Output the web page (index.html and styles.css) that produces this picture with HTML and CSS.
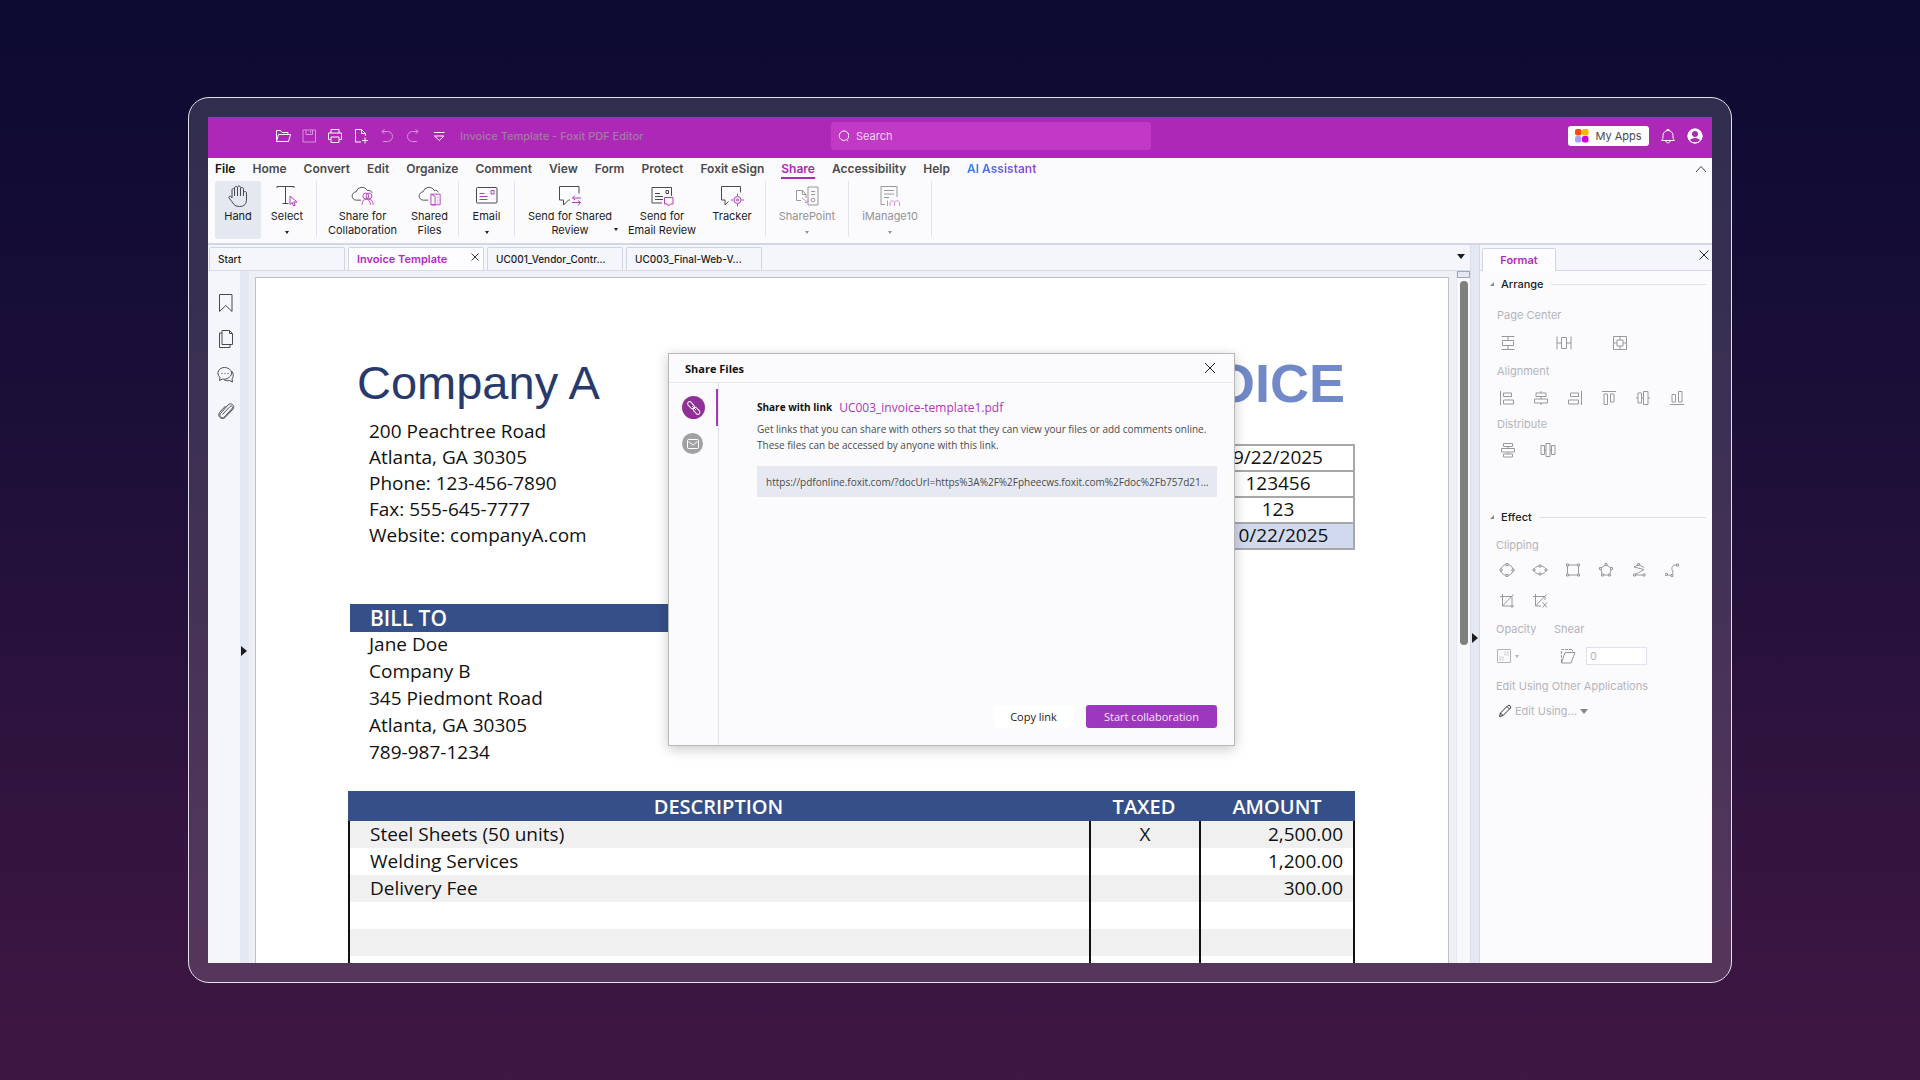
FILE: index.html
```html
<!DOCTYPE html>
<html lang="en">
<head>
<meta charset="utf-8">
<title>Invoice Template - Foxit PDF Editor</title>
<link rel="stylesheet" href="styles.css">
</head>
<body>
<div class="frame">
<div class="app">

  <header class="titlebar">
    <div class="quick">
      <button class="qa" aria-label="Open"><svg width="16" height="16" viewBox="0 0 16 16"><path d="M1.500 13.500V2.500h4l1.500 2h6v2M1.500 13.500l2-7h12l-2 7z"/></svg></button>
      <button class="qa dim" aria-label="Save"><svg width="16" height="16" viewBox="0 0 16 16"><path d="M2 2h12.500v12H2zM5 2v4.500h6.500V2M9.500 3v2"/></svg></button>
      <button class="qa" aria-label="Print"><svg width="16" height="16" viewBox="0 0 16 16"><path d="M4 5V1.500h8V5M4 11.500H1.500V5h13v6.500H12M4 9h8v5.500H4z"/></svg></button>
      <button class="qa" aria-label="New page"><svg width="16" height="16" viewBox="0 0 16 16"><path d="M8 14H2.500V1.500h6l4 4V8M8.500 1.500v4h4M12 9.500v6M9 12.500h6"/></svg></button>
      <button class="qa dim" aria-label="Undo"><svg width="16" height="16" viewBox="0 0 16 16"><path d="M5.500 1L3 3.500 5.500 6M3 3.500h5.500a5 5 0 0 1 0 10H4"/></svg></button>
      <button class="qa dim" aria-label="Redo"><svg width="16" height="16" viewBox="0 0 16 16"><path d="M10.500 1L13 3.500 10.500 6M13 3.500H7.500a5 5 0 0 0 0 10H12"/></svg></button>
      <button class="qa" aria-label="More"><svg width="16" height="16" viewBox="0 0 16 16"><path d="M3 4.500h10.500M3.500 8h9.500l-4.750 4.500z"/></svg></button>
    </div>
    <div class="doc-title">Invoice Template - Foxit PDF Editor</div>
    <label class="search">
      <svg width="12" height="12" viewBox="0 0 12 12"><path d="M10 9.500A4.800 4.800 0 1 0 8.500 10.300M9 9.200l2 2"/></svg>
      <input type="text" placeholder="Search" aria-label="Search">
    </label>
    <div class="account">
      <button class="my-apps"><svg width="14" height="14" viewBox="0 0 14 14"><rect width="6.500" height="6.500" rx="2" fill="#ff4e00"/><rect x="7" width="6.500" height="6.500" rx="2" fill="#ffb400"/><rect y="7" width="6.500" height="6.500" rx="2" fill="#a8a0ff"/><rect x="7" y="7" width="6.500" height="6.500" rx="2" fill="#cf00d8"/></svg>My Apps</button>
      <button class="qa" aria-label="Notifications"><svg width="16" height="16" viewBox="0 0 16 16"><path d="M1.500 12.500c1.500-1.500 1.500-2.500 1.500-5a5 5 0 0 1 10 0c0 2.500 0 3.500 1.500 5zM6 13c0 2.500 4 2.500 4 0M7 2.500V1.500h2v1"/></svg></button>
      <button class="qa" aria-label="Account"><svg width="16" height="16" viewBox="0 0 16 16"><circle cx="8" cy="8" r="7.500" fill="#fff" stroke="none"/><circle cx="8" cy="6" r="3" fill="#ae28b7" stroke="none"/><path d="M2.500 12.500c2-3.500 9-3.500 11 0-1.500 2.600-9.500 2.600-11 0z" fill="#ae28b7" stroke="none"/><circle cx="8" cy="8" r="7"/></svg></button>
    </div>
  </header>

  <nav class="menu">
    <a class="file" href="#">File</a><a href="#">Home</a><a href="#">Convert</a><a href="#">Edit</a><a href="#">Organize</a><a href="#">Comment</a><a href="#">View</a><a href="#">Form</a><a href="#">Protect</a><a href="#">Foxit eSign</a><a class="current" href="#">Share</a><a href="#">Accessibility</a><a href="#">Help</a><a class="ai" href="#"><span>AI Assistant</span></a>
    <button class="collapse" aria-label="Collapse ribbon"><svg width="12" height="8" viewBox="0 0 12 8"><path d="M1 7l5-5.500L11 7"/></svg></button>
  </nav>

  <div class="ribbon">
    <div class="group g-tools">
      <button class="tool w46 active"><svg viewBox="0 0 24 22"><path d="M6 13V5c0-2 2.500-2 2.500 0v6V3c0-2 3-2 3 0v8V2.500c0-2 3-2 3 0V11 4c0-2 3-2 3 0v7V8c0-2 3-2 3 0v6c0 5-2 7.500-7 7.500-4 0-5.500-1.500-6.500-3.500L3 13c-.8-1.800 1.500-2.500 2.500-1z"/></svg><span>Hand</span></button>
      <button class="tool w52"><svg viewBox="0 0 24 22"><path d="M2 3V1.500h17V3M10.500 1.500v17M7.500 18.500h6"/><path class="p" d="M15 11v8.500l2.200-2 1.300 3.500 1.700-.7-1.500-3.300H22z"/></svg><span>Select</span><i class="caret"></i></button>
    </div>
    <div class="group g-share">
      <button class="tool w84"><svg viewBox="0 0 26 22"><path d="M11 15.500H6a4.500 4.500 0 0 1-.5-9 6.500 6.500 0 0 1 12-1.500c3-.5 5 1 5.500 2.500"/><circle class="p" cx="16" cy="11" r="3.200"/><circle class="p" cx="19.500" cy="11" r="3.200"/><path class="p" d="M12 20.500c0-4 2-6 4.500-6s4.500 2 4.500 6M19 14.500c3 0 5 2 5 6"/></svg><span>Share for<br>Collaboration</span></button>
      <button class="tool w50"><svg viewBox="0 0 26 22"><path d="M11 15.500H6a4.500 4.500 0 0 1-.5-9 6.500 6.500 0 0 1 12-1.500c2.500-.5 4 .5 4.500 2"/><path class="p" d="M14 9h10v11.500H14zM14 9l4.500 2.500V21L14 20.500M21.500 12v1M21.500 15v1M21.500 18v1"/></svg><span>Shared<br>Files</span></button>
    </div>
    <div class="group g-mail">
      <button class="tool w52"><svg viewBox="0 0 24 22"><rect x="1.500" y="2.500" width="20.500" height="15.500" rx="1"/><path class="p" d="M4.500 8.500h5M4.500 11.500h8M4.500 14.500h8M16 5.500h3v3.500h-3z"/></svg><span>Email</span><i class="caret"></i></button>
    </div>
    <div class="group g-review">
      <button class="tool w104"><svg viewBox="0 0 24 22"><path d="M21 8.500V1.500H1.500v13.500h4V20l5-5H12"/><path class="p" d="M23 13h-8.500l2.500-2.500M14 17.500h8.500L20 20.500M14.500 13l2.500 2M22.500 17.500L20 15.500"/></svg><span>Send for Shared<br>Review</span><i class="caret side"></i></button>
      <button class="tool w80"><svg viewBox="0 0 24 22"><path d="M12 18H2V2.500h19.500V11M5 8.500h5M5 11.500h8M5 14.500h8M16 5.500h2.500v3H16z"/><path class="p" d="M14.500 12.500h8.500v6.500h-2.500l-2 2-1-2h-3z"/></svg><span>Send for<br>Email Review</span></button>
      <button class="tool w60"><svg viewBox="0 0 24 22"><path d="M20.500 7.500V1.500H1.500v13.500H5V20l3.500-3.500"/><circle class="p" cx="17.500" cy="15" r="3.500"/><circle class="p" cx="17.500" cy="15" r="1"/><path class="p" d="M17.500 8.500V11M17.500 19v2.500M11 15h2.500M21.500 15H24"/></svg><span>Tracker</span></button>
    </div>
    <div class="group g-cloud">
      <button class="tool w76 off"><svg viewBox="0 0 24 22"><path d="M6 15.500H1.500V5.500h6l3.500 4V13M7.500 5.500v4H11M13 2h10v18H13V2M16 6.500h4M16 9.500h4"/><circle cx="18" cy="15" r="1.800"/><path class="p" d="M7 13l6 4.500M13 14.500v3h-3.500"/></svg><span>SharePoint</span><i class="caret"></i></button>
    </div>
    <div class="group g-cloud">
      <button class="tool w76 off"><svg viewBox="0 0 24 22"><path d="M7 19.500H3V1.500h16V12M6 5.500h10M6 9h10M6 12.500h5"/><path class="p" d="M9.500 21v-5.500M12 21v-3c0-3 4.500-3 4.500 0v3M16.500 18c0-3 5-3 5 0v3M9.500 13.500v.5"/></svg><span>iManage10</span><i class="caret"></i></button>
    </div>
  </div>

  <div class="work">
    <div class="main">
      <div class="tabs">
        <button class="tab">Start</button>
        <button class="tab on">Invoice Template<svg width="10" height="10" viewBox="0 0 10 10"><path d="M1.500 1.500l7 7M8.500 1.500l-7 7"/></svg></button>
        <button class="tab">UC001_Vendor_Contr...</button>
        <button class="tab">UC003_Final-Web-V...</button>
        <button class="tab-list" aria-label="All tabs"><i class="caret big"></i></button>
      </div>
      <div class="body">
        <aside class="rail">
          <button aria-label="Bookmarks"><svg viewBox="0 0 18 20"><path d="M2.500 1.500h12.500v17l-6.250-6-6.250 6z"/></svg></button>
          <button aria-label="Pages"><svg viewBox="0 0 18 20"><path d="M5 1.500h7.500l3 3V15.500H5zM12.500 1.500v3h3M5 4H2.500v14.500H13v-3"/></svg></button>
          <button aria-label="Comments"><svg viewBox="0 0 18 20"><path d="M3 12.500C-1.500 8 2 2.500 7.500 2.500s9 5 6 8.500-6.500 3.500-8 3l-3 1.500zM14.500 6c2.500 2.500 2 6 .5 8l.5 3-3-1.500c-2 .5-4 .3-5.500-.8"/><path d="M4.500 8.500h1M7.500 8.500h1M10.500 8.500h1"/></svg></button>
          <button aria-label="Attachments"><svg viewBox="0 0 18 20"><path d="M5.500 13.500l7.500-8c1.500-1.500 3.500.5 2 2l-7.500 8.500c-2.500 2.500-6-.5-4-3.500L11 4c3-3 7.500.5 5 4l-8 8.500c-3 3-8-1-5.500-5L8.500 5"/></svg></button>
        </aside>
        <div class="splitter"><i class="arrow left-arrow"></i></div>
        <div class="canvas">
          <article class="page">
            <section class="top">
              <div class="seller">
                <h1>Company A</h1>
                <address>200 Peachtree Road<br>Atlanta, GA 30305<br>Phone: 123-456-7890<br>Fax: 555-645-7777<br>Website: companyA.com</address>
              </div>
              <div class="facts">
                <h2>INVOICE</h2>
                <table>
                  <tr><td>9/22/2025</td></tr>
                  <tr><td>123456</td></tr>
                  <tr><td>123</td></tr>
                  <tr class="due"><td>10/22/2025</td></tr>
                </table>
              </div>
            </section>
            <section class="bill">
              <h3>BILL TO</h3>
              <address>Jane Doe<br>Company B<br>345 Piedmont Road<br>Atlanta, GA 30305<br>789-987-1234</address>
            </section>
            <table class="items">
              <colgroup><col><col class="c-tax"><col class="c-amt"></colgroup>
              <thead><tr><th>DESCRIPTION</th><th>TAXED</th><th>AMOUNT</th></tr></thead>
              <tbody>
                <tr><td>Steel Sheets (50 units)</td><td>X</td><td>2,500.00</td></tr>
                <tr><td>Welding Services</td><td></td><td>1,200.00</td></tr>
                <tr><td>Delivery Fee</td><td></td><td>300.00</td></tr>
                <tr><td></td><td></td><td></td></tr>
                <tr><td></td><td></td><td></td></tr>
                <tr><td></td><td></td><td></td></tr>
              </tbody>
            </table>
          </article>
          <div class="scroll"><div class="split-box"></div><div class="thumb"></div></div>
        </div>
      </div>
    </div>
    <div class="splitter full"><i class="arrow right-arrow"></i></div>

    <aside class="panel">
      <div class="panel-tabs"><button class="tab fmt on">Format</button><button class="x" aria-label="Close panel"><svg width="12" height="12" viewBox="0 0 12 12"><path d="M1.500 1.500l9 9M10.500 1.500l-9 9"/></svg></button></div>
      <div class="panel-body">
        <h4>Arrange</h4>
        <p class="lab center-lab">Page Center</p>
        <div class="icons wide">
          <button aria-label="Center vertically"><svg viewBox="0 0 16 16"><path d="M1.500 1.500h13M1.500 14.500h13M8 1.500V5M8 11v3.500M2.500 5.500h11v5h-11z"/></svg></button>
          <button aria-label="Center horizontally"><svg viewBox="0 0 16 16"><path d="M1 1.500v13M15 1.500v13M1 8h4M11 8h4M5.500 2.500h5v11h-5z"/></svg></button>
          <button aria-label="Center both"><svg viewBox="0 0 16 16"><path d="M1.500 1.500h13v13h-13zM5 5h6v6H5zM8 1.500V5M8 11v3.500M1.500 8H5M11 8h3.500"/></svg></button>
        </div>
        <p class="lab">Alignment</p>
        <div class="icons">
          <button aria-label="Align left"><svg viewBox="0 0 16 16"><path d="M1.500 1v14M4.500 3h8v3.500h-8zM4.500 10h10v4h-10z"/></svg></button>
          <button aria-label="Align center"><svg viewBox="0 0 16 16"><path d="M8 1v2M8 6.500V9M8 13v2M3 3h10v3.500H3zM1.500 9h13v4h-13z"/></svg></button>
          <button aria-label="Align right"><svg viewBox="0 0 16 16"><path d="M14.500 1v14M3.500 3h8v3.500h-8zM1.500 10h10v4h-10z"/></svg></button>
          <button aria-label="Align top"><svg viewBox="0 0 16 16"><path d="M1 1.500h14M3 4h3.500v10.500H3zM9.500 4H13v8H9.500z"/></svg></button>
          <button aria-label="Align middle"><svg viewBox="0 0 16 16"><path d="M1 8h2M6.500 8h2M13 8h2M3 3h3.500v10H3zM8.500 1.500H13v13H8.500z"/></svg></button>
          <button aria-label="Align bottom"><svg viewBox="0 0 16 16"><path d="M1 14.500h14M3 4.500h3.500V12H3zM9.500 1.500H13V12H9.500z"/></svg></button>
        </div>
        <p class="lab">Distribute</p>
        <div class="icons mid">
          <button aria-label="Distribute vertically"><svg viewBox="0 0 16 16"><path d="M3.500 1.500h9v3h-9zM1.500 6.500h13v3.500h-13zM3.500 12h9v3h-9zM8 4.500v2M8 10v2"/></svg></button>
          <button aria-label="Distribute horizontally"><svg viewBox="0 0 16 16"><path d="M1 3.500h3.500v9H1zM6 1.500h4v13H6zM11.500 3.500H15v9h-3.500zM4.500 8H6M10 8h1.500"/></svg></button>
        </div>
        <h4 class="effect">Effect</h4>
        <p class="lab clip-lab">Clipping</p>
        <div class="icons clip">
          <button aria-label="Circle"><svg viewBox="0 0 16 16"><ellipse cx="8" cy="8" rx="6" ry="5.500"/><path class="n" d="M7 1.500h2v2H7zM7 12.500h2v2H7zM1 7h2v2H1zM13 7h2v2h-2z"/></svg></button>
          <button aria-label="Ellipse"><svg viewBox="0 0 16 16"><ellipse cx="8" cy="8" rx="6" ry="4"/><path class="n" d="M7 3h2v2H7zM7 11h2v2H7zM1 7h2v2H1zM13 7h2v2h-2z"/></svg></button>
          <button aria-label="Rectangle"><svg viewBox="0 0 16 16"><path d="M2.500 3h11v10h-11z"/><path class="n" d="M1.500 2h2v2h-2zM12.500 2h2v2h-2zM1.500 12h2v2h-2zM12.500 12h2v2h-2z"/></svg></button>
          <button aria-label="Polygon"><svg viewBox="0 0 16 16"><path d="M8 2.500l5.500 4L11.500 13h-7l-2-6.500z"/><path class="n" d="M7 1.500h2v2H7zM12.500 5.500h2v2h-2zM1.500 5.500h2v2h-2zM3.500 12h2v2h-2zM10.500 12h2v2h-2z"/></svg></button>
          <button aria-label="Polyline"><svg viewBox="0 0 16 16"><path d="M7.500 2.500L3 5l10 2.500-9.500 5.500h9.500M7.500 2.500l5.500 3"/><path class="n" d="M6.500 1.500h2v2h-2zM2.500 12h2v2h-2zM12 12h2v2h-2z"/></svg></button>
          <button aria-label="Path"><svg viewBox="0 0 16 16"><path d="M3 12.500c4 2 7 0 5.500-3.500S8 3 13 3"/><path class="n" d="M1.500 11.500h2v2h-2zM12.500 2h2v2h-2zM7 12.500h2v2H7z"/></svg></button>
          <button aria-label="Edit clipping"><svg viewBox="0 0 16 16"><path d="M3.500 1v12H15M1 3.500h12V15M3.500 13L14.500 1.500"/></svg></button>
          <button aria-label="Clear clipping"><svg viewBox="0 0 16 16"><path d="M3.500 1v12H9M1 3.500h12V7M3.500 13L14.500 1.500M10.500 9.500l4.500 5M15 9.500l-4.500 5"/></svg></button>
        </div>
        <div class="pair"><span>Opacity</span><label for="shear">Shear</label></div>
        <div class="pair-row">
          <button class="swatch" aria-label="Opacity"><svg width="16" height="16" viewBox="0 0 16 16"><path d="M1.500 1.500h13v13h-13z"/><path d="M8 3h5v5H8zM3 8h5v5H3z" fill="#e8e8ea" stroke="none"/></svg><i class="caret"></i></button>
          <svg class="shear-ic" width="16" height="16" viewBox="0 0 16 16"><path d="M5 4.500h10L11 15H1.500z"/><path d="M1.500 14V1.500h11v2" stroke-dasharray="3 1"/></svg>
          <input id="shear" type="text" value="0">
        </div>
        <p class="lab edit-lab">Edit Using Other Applications</p>
        <button class="edit"><svg width="14" height="14" viewBox="0 0 14 14"><path d="M1.500 12.500l1-3.500 7.500-7.500c1-1 3.500 1 2.500 2.500L5 11.500zM9 2.500L11.500 5M2.500 9L5 11.500"/></svg>Edit Using...<i class="caret big grey"></i></button>
      </div>
    </aside>
  </div>

  <section class="dialog" role="dialog" aria-labelledby="dlg-title">
    <header><h5 id="dlg-title">Share Files</h5><button aria-label="Close"><svg width="12" height="12" viewBox="0 0 12 12"><path d="M1 1l10 10M11 1L1 11"/></svg></button></header>
    <div class="dlg-main">
      <div class="dlg-side">
        <button class="round link" aria-label="Share with link"><svg width="16" height="16" viewBox="0 0 16 16"><rect x="1" y="3.200" width="8" height="4" rx="2" transform="rotate(48 5 5.200)"/><rect x="6.500" y="8.800" width="8" height="4" rx="2" transform="rotate(48 10.500 10.800)"/><path d="M6 6l4 4"/></svg></button>
        <button class="round mail" aria-label="Share by email"><svg width="14" height="14" viewBox="0 0 14 14"><rect x="1.500" y="2.500" width="11" height="9" rx="1"/><path d="M2.500 4.500L7 8l4.500-3.500"/></svg></button>
      </div>
      <div class="dlg-body">
        <div class="dlg-title-row"><strong>Share with link</strong><a href="#">UC003_invoice-template1.pdf</a></div>
        <p>Get links that you can share with others so that they can view your files or add comments online. These files can be accessed by anyone with this link.</p>
        <input type="text" readonly aria-label="Link" value="https://pdfonline.foxit.com/?docUrl=https%3A%2F%2Fpheecws.foxit.com%2Fdoc%2Fb757d21...">
        <div class="dlg-actions"><button class="copy">Copy link</button><button class="start">Start collaboration</button></div>
      </div>
    </div>
  </section>

</div>
</div>
</body>
</html>
```
FILE: styles.css
```css
* { box-sizing: border-box; margin: 0; padding: 0; }
html { height: 100%; }
body {
  min-height: 100vh;
  display: flex;
  padding: 97px 188px;
  background: linear-gradient(180deg, #0c0a31 0%, #1c0f38 40%, #32143f 75%, #401743 100%);
  font-family: Inter, "Liberation Sans", sans-serif;
  font-size: 11px;
  color: #1c1c1e;
}
button { border: 0; background: none; font: inherit; color: inherit; display: flex; align-items: center; justify-content: center; }
a { color: inherit; text-decoration: none; }
svg { fill: none; stroke: currentColor; stroke-width: 1; flex: none; }
i { font-style: normal; }
address { font-style: normal; }

.frame {
  flex: 1;
  min-width: 0;
  display: flex;
  padding: 19px;
  border: 1px solid #e3e0ea;
  border-radius: 21px;
  background: rgba(255, 255, 255, .14);
}
.app {
  flex: 1;
  min-width: 0;
  height: calc(100vh - 234px);
  display: flex;
  flex-direction: column;
  position: relative;
  overflow: hidden;
  background: #fbfbfe;
}

/* title bar */
.titlebar { flex: none; height: 41px; display: grid; grid-template-columns: 252px 371px 320px 1fr; background: #ae28b7; color: #fff; padding-bottom: 4px; align-items: center; }
.quick { display: flex; gap: 10px; padding-left: 67px; }
.qa { width: 16px; height: 16px; }
.quick .dim { opacity: .5; }
.doc-title { font-size: 11px; font-weight: 500; color: #a07ea0; }
.search { height: 28px; display: flex; align-items: center; gap: 7px; padding-left: 6px; border-radius: 3px; background: #c239c6; }
.search input { flex: 1; border: 0; background: none; outline: 0; font: 11px Inter, sans-serif; color: #f3d4f5; }
.search input::placeholder { color: #f3d4f5; }
.account { display: flex; justify-content: flex-end; align-items: center; gap: 11px; padding-right: 9px; }
.my-apps { height: 20px; width: 81px; gap: 6px; border-radius: 3px; background: #fff; color: #4a4a4e; }
.my-apps svg { stroke: none; }

/* menu */
.menu { flex: none; height: 22px; display: flex; gap: 17px; padding: 0 5px 0 7px; font-size: 12px; font-weight: 600; color: #4a4a4c; line-height: 22px; }
.menu .file { color: #111; }
.menu .current { color: #ae28b7; border-bottom: 2px solid #ae28b7; height: 21px; }
.menu .ai span { background: linear-gradient(90deg, #2b7cf0, #9840e8); -webkit-background-clip: text; background-clip: text; color: transparent; }
.collapse { margin-left: auto; width: 12px; color: #444; }

/* ribbon */
.ribbon { flex: none; height: 65px; display: flex; padding: 1px 0 0 7px; border-bottom: 2px solid #d3d7e4; }
.group { display: flex; justify-content: center; height: 56px; border-right: 1px solid #e2e5f0; }
.g-tools { width: 102px; justify-content: flex-start; }
.g-share { width: 142px; }
.g-mail { width: 56px; }
.g-review { width: 251px; }
.g-cloud { width: 83px; }
.tool { position: relative; flex-direction: column; justify-content: flex-start; height: 58px; padding-top: 4px; border-radius: 3px; font-size: 11px; line-height: 14px; color: #1c1c1e; }
.tool svg { width: 24px; height: 22px; margin-bottom: 2px; color: #4a4a4c; }
.tool .p { stroke: #b53cc0; }
.tool.active { background: #e3e8f1; }
.tool.off { color: #929296; }
.tool.off svg { opacity: .55; }
.w46 { width: 46px; } .w50 { width: 50px; } .w52 { width: 52px; } .w60 { width: 60px; }
.w76 { width: 76px; } .w80 { width: 80px; } .w84 { width: 84px; } .w104 { width: 104px; }
.caret { width: 0; height: 0; border: 2px solid transparent; border-top: 3px solid currentColor; border-bottom: 0; }
.tool .caret { margin-top: 8px; }
.tool .caret.side { position: absolute; right: 4px; bottom: 8px; }
.caret.big { border-width: 4px; border-top-width: 5px; border-bottom: 0; }

/* work area */
.work { flex: 1; min-height: 0; display: flex; }
.main { flex: 1; min-width: 0; display: flex; flex-direction: column; }
.tabs { flex: none; height: 26px; display: flex; align-items: flex-end; gap: 3px; padding: 0 4px 0 1px; background: #f4f6fb; border-bottom: 1px solid #d8dce8; }
.tab { width: 136px; height: 23px; justify-content: space-between; padding: 0 3px 0 8px; border: 1px solid #d0d5e3; border-bottom: 0; background: #f5f6fb; border-radius: 2px 2px 0 0; font-size: 10px; font-weight: 500; }
.tab svg { margin-bottom: 4px; color: #333; }
.tab.on { background: #fdfdff; color: #b52abf; font-size: 11px; font-weight: 600; }
.tab-list { margin: 0 0 9px auto; width: 10px; height: 10px; }
.body { flex: 1; min-height: 0; display: flex; }
.rail { width: 32px; background: #f4f6fb; display: flex; flex-direction: column; align-items: center; gap: 16px; padding: 22px 0 0 3px; color: #4a4a4c; }
.rail svg { width: 18px; height: 20px; }
.splitter { width: 9px; flex: none; display: flex; background: #e4e8f2; }
.splitter.full { width: 10px; border-left: 1px solid #d9deea; border-right: 1px solid #d3d7e4; }
.arrow { width: 0; height: 0; border: 5px solid transparent; border-left: 6px solid #1c1c1e; border-right: 0; }
.left-arrow { margin: 375px 0 0 1px; }
.right-arrow { margin: 388px 0 0 1px; }

.canvas { flex: 1; min-width: 0; display: flex; background: #eef0f5; padding: 0 0 0 6px; }
.page { flex: 1; min-width: 0; margin: 6px 7px 0 0; padding: 82px 93px 0; background: #fff; border: 1px solid #bfc1ca; border-bottom: 0; font-family: "Trebuchet MS", "Open Sans", sans-serif; font-size: 19px; line-height: 27px; color: #111; overflow: hidden; }
.top { display: flex; justify-content: space-between; height: 244px; }
.seller h1 { font: 47px/46px "Liberation Sans", Arial, sans-serif; color: #283a6b; padding-left: 8px; margin-bottom: 12px; }
.seller address { line-height: 26px; }
.seller address, .bill address { padding-left: 20px; }
.facts { display: flex; flex-direction: column; align-items: flex-end; }
.facts h2 { font: bold 54px/46px "Liberation Sans", Arial, sans-serif; color: #7189c9; margin: 0 10px 38px 0; }
.facts table { width: 154px; border-collapse: collapse; text-align: center; }
.facts td { border: 2px solid #a8a8a8; height: 26px; padding-bottom: 2px; line-height: 22px; }
.due td { background: #d0d9ee; }
.bill { height: 187px; }
.bill h3 { width: 420px; height: 28px; margin-left: 1px; padding-left: 20px; background: #354f88; color: #fff; font-size: 21px; line-height: 28px; font-weight: 600; }
.bill address { margin-top: -1px; }
.items { width: calc(100% + 1px); margin-left: -1px; table-layout: fixed; border-collapse: separate; border-spacing: 0; }
.items .c-tax { width: 110px; } .items .c-amt { width: 156px; }
.items th { height: 30px; background: #354f88; color: #fff; font-size: 20px; font-weight: 600; }
.items td { height: 27px; padding-left: 20px; border-left: 2px solid #111; }
.items td:nth-child(2) { padding: 0; text-align: center; }
.items td:nth-child(3) { text-align: right; padding: 0 10px 0 0; border-right: 2px solid #111; }
.items tbody tr:nth-child(odd) { background: #f0f0f0; }

.scroll { width: 14px; flex: none; display: flex; flex-direction: column; align-items: center; gap: 3px; background: #f8f8fa; border-left: 1px solid #e6e8ef; }
.split-box { width: 13px; height: 7px; border: 1px solid #9fa5bd; background: #e4e8f2; }
.thumb { width: 8px; height: 364px; border-radius: 4px; background: #7f7f80; }

/* format panel */
.panel { width: 232px; flex: none; background: #fbfbfe; color: #b4b4b8; }
.panel-tabs { height: 26px; display: flex; align-items: flex-end; justify-content: space-between; padding: 0 2px; background: #f4f6fb; border-bottom: 1px solid #d3d7e4; }
.tab.fmt { width: 74px; height: 23px; justify-content: center; padding: 0; margin-bottom: -1px; }
.x { margin-bottom: 9px; color: #222; }
.panel-body { padding: 5px 6px 0 16px; }
.panel h4 { display: flex; align-items: center; gap: 7px; height: 16px; font-size: 11px; font-weight: 500; color: #1c1c1e; margin-left: -6px; }
.panel h4::before { content: ""; border-left: 4px solid transparent; border-bottom: 4px solid #888; }
.panel h4::after { content: ""; flex: 1; height: 1px; background: #e0e1e8; }
.lab { height: 16px; line-height: 16px; margin-left: 1px; }
.center-lab { margin-top: 15px; }
.icons { display: flex; flex-wrap: wrap; gap: 15px 18px; padding-left: 3px; margin: 11px 0 10px; color: #98989c; }
.icons button { width: 16px; height: 16px; }
.icons svg { width: 16px; height: 16px; }
.icons .n { fill: #fbfbfe; }
.icons.wide { gap: 40px; padding-left: 4px; margin: 12px 0 12px; }
.icons.mid { gap: 24px; padding-left: 4px; margin: 10px 0 0; }
.effect.effect { margin-top: 51px; }
.clip-lab { margin: 12px 0 0; }
.icons.clip { gap: 15px 17px; margin: 9px 0 12px; }
.pair { display: flex; height: 16px; align-items: center; }
.pair span { width: 58px; }
.pair-row { display: flex; align-items: center; height: 18px; margin-top: 10px; }
.swatch { gap: 3px; width: 22px; }
.shear-ic { margin: 0 10px 0 42px; color: #98989c; }
.pair-row input { width: 61px; height: 18px; border: 1px solid #e0e3ee; background: #fff; font: 11px Inter, sans-serif; color: #b4b4b8; padding: 0 3px; }
.edit-lab { margin: 13px 0 0; }
.edit { height: 16px; margin: 9px 0 0 2px; gap: 3px; }
.edit svg { color: #333; }
.grey { color: #88888c; }

/* share dialog */
.dialog {
  position: absolute;
  left: 460px;
  top: 236px;
  width: 567px;
  height: 393px;
  display: flex;
  flex-direction: column;
  border: 1px solid #b7b7ba;
  background: #fbfbfe;
  box-shadow: 0 3px 12px rgba(0, 0, 0, .22);
  font-family: "Segoe UI", "Open Sans", sans-serif;
  font-size: 10px;
}
.dialog header { flex: none; height: 29px; display: flex; align-items: center; justify-content: space-between; padding: 0 18px 0 16px; border-bottom: 1px solid #e7e8ef; }
.dialog h5 { font-size: 11px; font-weight: 700; color: #111; }
.dlg-main { flex: 1; display: flex; }
.dlg-side { width: 50px; display: flex; flex-direction: column; align-items: flex-start; gap: 14px; padding: 13px 0 0 13px; border-right: 1px solid #e5e6ec; background: linear-gradient(#a13cb4, #a13cb4) right 6px / 2px 37px no-repeat; }
.round { border-radius: 50%; color: #fff; }
.link { width: 23px; height: 23px; background: #8f2f97; }
.mail { width: 21px; height: 21px; background: #a1a1a3; }
.dlg-body { flex: 1; min-width: 0; display: flex; flex-direction: column; padding: 14px 17px 17px 38px; }
.dlg-title-row { display: flex; align-items: center; gap: 7px; height: 20px; color: #111; }
.dlg-title-row a { font-size: 12px; color: #ac35b8; }
.dlg-body p { margin-top: 4px; line-height: 16px; color: #4a4a4c; }
.dlg-body input { height: 31px; margin-top: 13px; border: 0; padding: 0 2px 0 9px; background: #e6e9f1; color: #4a4a4c; font: inherit; text-overflow: ellipsis; }
.dlg-actions { margin-top: auto; display: flex; justify-content: flex-end; gap: 13px; font-size: 11px; }
.copy { width: 79px; height: 23px; border-radius: 3px; background: #fff; color: #222; }
.start { width: 131px; height: 23px; border-radius: 3px; background: #9d37bf; color: #f6e3fa; }
```
